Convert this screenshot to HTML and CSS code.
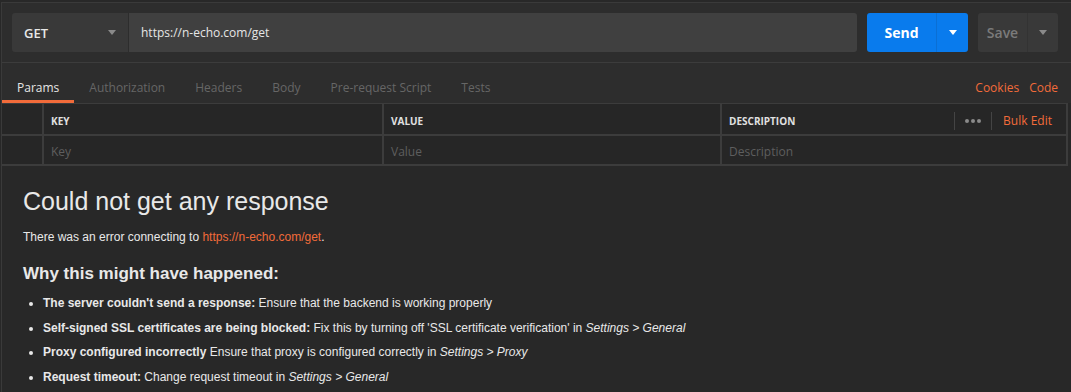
FILE: index.html
```html
<!DOCTYPE html>
<html lang="en">
<head>
  <meta charset="UTF-8">
  <title>Request</title>
  <link rel="stylesheet" href="styles.css">
</head>
<body>
  <div class="app">
    <div class="request-bar">
      <div class="method">GET <span class="caret"></span></div>
      <div class="url">https://n-echo.com/get</div>
      <div class="send-group">
        <div class="send">Send</div>
        <div class="send-arrow"><span class="caret white"></span></div>
      </div>
      <div class="save-group">
        <div class="save">Save</div>
        <div class="save-arrow"><span class="caret"></span></div>
      </div>
    </div>

    <div class="tabs">
      <div class="tab active">Params</div>
      <div class="tab">Authorization</div>
      <div class="tab">Headers</div>
      <div class="tab">Body</div>
      <div class="tab">Pre-request Script</div>
      <div class="tab">Tests</div>
      <div class="tab-links">
        <span>Cookies</span>
        <span>Code</span>
      </div>
    </div>

    <div class="params">
      <div class="row head">
        <div class="cell check"></div>
        <div class="cell key">KEY</div>
        <div class="cell value">VALUE</div>
        <div class="cell desc">
          <span>DESCRIPTION</span>
          <div class="desc-tools">
            <span class="dots"><i></i><i></i><i></i></span>
            <span class="bulk">Bulk Edit</span>
          </div>
        </div>
      </div>
      <div class="row">
        <div class="cell check"></div>
        <div class="cell key ph">Key</div>
        <div class="cell value ph">Value</div>
        <div class="cell desc ph">Description</div>
      </div>
    </div>

    <div class="response">
      <h1>Could not get any response</h1>
      <p>There was an error connecting to <a>https://n-echo.com/get</a>.</p>
      <h2>Why this might have happened:</h2>
      <ul>
        <li><b>The server couldn't send a response:</b> Ensure that the backend is working properly</li>
        <li><b>Self-signed SSL certificates are being blocked:</b> Fix this by turning off 'SSL certificate verification' in <i>Settings &gt; General</i></li>
        <li><b>Proxy configured incorrectly</b> Ensure that proxy is configured correctly in <i>Settings &gt; Proxy</i></li>
        <li><b>Request timeout:</b> Change request timeout in <i>Settings &gt; General</i></li>
      </ul>
    </div>
  </div>
</body>
</html>
```

FILE: styles.css
```css
body {
  margin: 0;
  padding: 2px 0 0 1px;
  background: #282828;
  font-family: 'Open Sans', sans-serif;
  color: #e0e0e0;
  height: 390px;
  overflow: hidden;
}

.app {
  border-top: 1px solid #3a3a3a;
  border-left: 1px solid #3a3a3a;
  min-height: 400px;
}

/* top request bar */
.request-bar {
  display: flex;
  align-items: stretch;
  height: 39px;
  padding: 10px 13px 10px 10px;
  background: #2d2d2d;
  border-bottom: 1px solid #3c3c3c;
}

.method {
  width: 116px;
  box-sizing: border-box;
  display: flex;
  align-items: center;
  justify-content: space-between;
  padding: 0 12px 0 12px;
  background: #393939;
  border-radius: 3px 0 0 3px;
  font-size: 13px;
  font-weight: 600;
  color: #e8e8e8;
}

.caret {
  display: inline-block;
  width: 0;
  height: 0;
  border-left: 4px solid transparent;
  border-right: 4px solid transparent;
  border-top: 5px solid #8a8a8a;
}

.caret.white {
  border-top-color: #ffffff;
}

.url {
  flex: 1;
  display: flex;
  align-items: center;
  padding-left: 12px;
  background: #404040;
  border-left: 1px solid #2d2d2d;
  border-radius: 0 3px 3px 0;
  font-size: 12px;
  color: #e6e6e6;
}

.send-group, .save-group {
  display: flex;
  border-radius: 3px;
  overflow: hidden;
  margin-left: 10px;
}

.send {
  width: 69px;
  display: flex;
  align-items: center;
  justify-content: center;
  background: #097bed;
  color: #ffffff;
  font-size: 14px;
  font-weight: 700;
}

.send-arrow {
  width: 31px;
  display: flex;
  align-items: center;
  justify-content: center;
  background: #097bed;
  border-left: 1px solid #0b6fd4;
}

.save {
  width: 49px;
  display: flex;
  align-items: center;
  justify-content: center;
  background: #393939;
  color: #7b7b7b;
  font-size: 14px;
  font-weight: 600;
}

.save-arrow {
  width: 30px;
  display: flex;
  align-items: center;
  justify-content: center;
  background: #393939;
  border-left: 1px solid #333333;
}

/* tabs */
.tabs {
  display: flex;
  height: 40px;
  background: #2d2d2d;
  font-size: 12px;
}

.tab {
  padding: 11px 15px 0;
  display: flex;
  align-items: center;
  color: #666666;
  border-bottom: 3px solid transparent;
}

.tab.active {
  color: #e6e6e6;
  border-bottom-color: #f26b3a;
}

.tab-links {
  margin-left: auto;
  display: flex;
  gap: 10px;
  align-items: center;
  padding: 11px 13px 3px 0;
  color: #f26b3a;
}

/* params table */
.params {
  width: 1066px;
  border-top: 1px solid #3c3c3c;
  background: #262626;
  font-size: 12px;
}

.row {
  display: grid;
  grid-template-columns: 40px 340px 338px 1fr;
  height: 28px;
  border-bottom: 2px solid #3c3c3c;
}

.row.head {
  height: 30px;
}

.cell {
  display: flex;
  align-items: center;
  padding: 3px 0 0 7px;
  border-left: 2px solid #3c3c3c;
}

.cell.check {
  border-left: none;
  padding: 0;
}

.cell.desc {
  border-right: 2px solid #3c3c3c;
  justify-content: space-between;
}

.head .cell {
  font-size: 10px;
  font-weight: 700;
  color: #e0e0e0;
}

.ph {
  color: #5e5e5e;
}

.desc-tools {
  display: flex;
  align-items: center;
  height: 100%;
}

.dots {
  display: flex;
  gap: 2px;
  height: 18px;
  align-items: center;
  padding: 0 10px;
  border-left: 1px solid #444444;
  border-right: 1px solid #444444;
}

.dots i {
  width: 4px;
  height: 4px;
  border-radius: 50%;
  background: #8a8a8a;
}

.bulk {
  font-size: 12px;
  font-weight: 400;
  color: #f26b3a;
  padding: 0 14px 0 11px;
}

/* response */
.response {
  padding: 21px 0 0 21px;
  font-family: 'Liberation Sans', Arial, sans-serif;
  color: #e8e8e8;
}

.response h1 {
  font-size: 25px;
  font-weight: 400;
  margin: 0 0 14px;
}

.response p {
  font-size: 12px;
  margin: 0 0 20px;
}

.response a {
  color: #f26b3a;
}

.response h2 {
  font-size: 17px;
  font-weight: 700;
  margin: 0 0 12px;
}

.response ul {
  margin: 0;
  padding-left: 20px;
  font-size: 12px;
}

.response li {
  line-height: 14px;
  margin-bottom: 10.7px;
}
```
